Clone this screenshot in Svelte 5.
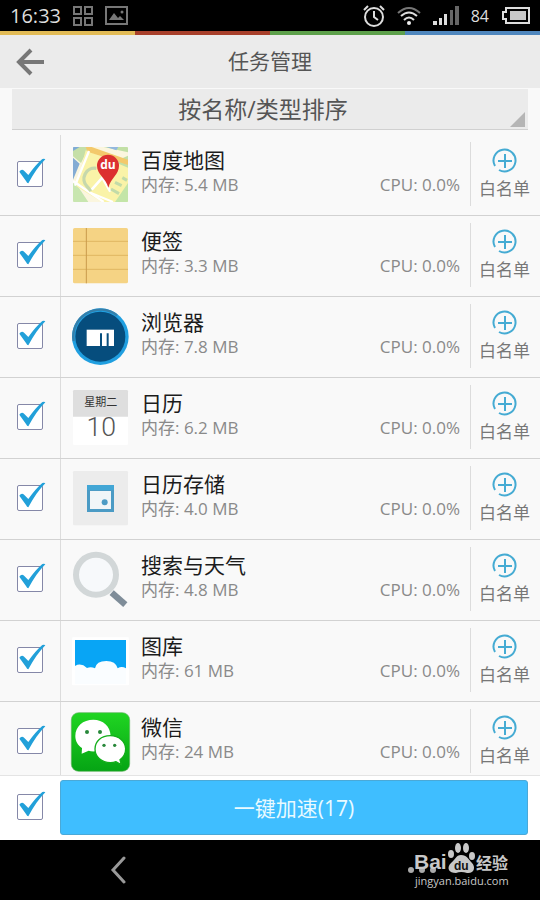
<script>
  let apps = $state([
    { id: 'map', name: '百度地图', memory: '5.4 MB', cpu: '0.0%', checked: true },
    { id: 'notes', name: '便签', memory: '3.3 MB', cpu: '0.0%', checked: true },
    { id: 'browser', name: '浏览器', memory: '7.8 MB', cpu: '0.0%', checked: true },
    { id: 'calendar', name: '日历', memory: '6.2 MB', cpu: '0.0%', checked: true },
    { id: 'storage', name: '日历存储', memory: '4.0 MB', cpu: '0.0%', checked: true },
    { id: 'search', name: '搜索与天气', memory: '4.8 MB', cpu: '0.0%', checked: true },
    { id: 'gallery', name: '图库', memory: '61 MB', cpu: '0.0%', checked: true },
    { id: 'wechat', name: '微信', memory: '24 MB', cpu: '0.0%', checked: true }
  ])

  let total = $state(17)
  let allChecked = $state(true)

  function toggleAll() {
    apps.forEach((app) => (app.checked = allChecked))
  }
</script>

{#snippet tick()}
  <svg class="tick" viewBox="0 0 78 78" aria-hidden="true">
    <path d="M7 32 Q14 22 22 30 L34 42 Q56 11 76 -6 Q83 -8 85 -5 Q58 22 34 67 Q30 67 27 60 Z" />
  </svg>
{/snippet}

{#snippet icon(id)}
  <svg class="icon" viewBox="0 0 165 165" aria-hidden="true">
    {#if id === 'map'}
      <clipPath id="map-clip"><rect width="165" height="165" rx="3" /></clipPath>
      <g clip-path="url(#map-clip)">
        <rect width="165" height="165" fill="#fbf6df" />
        <path d="M0 0H48L24 48 0 28Z" fill="#c5dfa8" />
        <path d="M0 0H20L0 12Z" fill="#7fabd6" />
        <path d="M0 32L20 50 0 98Z" fill="#84acd4" />
        <path d="M0 108L12 114 46 165H0Z" fill="#c8e6b0" />
        <path d="M92 0H165V16Z" fill="#c2e0a6" />
        <path d="M100 0H136L130 10Z" fill="#93b8df" />
        <path d="M134 40L165 26V98L138 76Z" fill="#c3dfa6" />
        <path d="M38 10L80 26 165 62V165H86L10 118Z" fill="#faf3a8" />
        <path d="M38 0H56L165 38V54L44 14Z" fill="#f3c96b" />
        <path d="M48 12L6 116" stroke="#fff" stroke-width="7" />
        <path d="M0 102L92 165" stroke="#fff" stroke-width="7" />
        <path d="M126 165L165 108V165Z" fill="#c3e5a8" />
        <path d="M70 64A32 32 0 0 0 42 118L54 132" fill="none" stroke="#c6d8ac" stroke-width="10" />
        <path d="M56 128L88 92 112 134" fill="none" stroke="#fff" stroke-width="8" />
        <path d="M126 106L146 116M114 126L138 140M148 92L162 100" stroke="#c2dba8" stroke-width="9" />
        <path d="M54 138L120 165" stroke="#fff" stroke-width="6" />
      </g>
      <path d="M106 122C98 92 72 82 72 56A33 33 0 0 1 138 56C138 82 114 92 106 122Z" fill="#dc3030" />
      <text x="105" y="67" class="pin">du</text>
    {:else if id === 'notes'}
      <rect width="165" height="166" rx="5" fill="#f5d384" />
      <path d="M0 40H165M0 82H165M0 124H165" stroke="#dfb662" stroke-width="3" />
      <path d="M40 0V166" stroke="#c99a4c" stroke-width="3" />
    {:else if id === 'browser'}
      <circle cx="82" cy="83" r="85" fill="#209fe0" />
      <path d="M2 96A81 81 0 0 1 132 19" fill="none" stroke="#347fab" stroke-width="7" />
      <circle cx="82" cy="83" r="75" fill="#064d7d" />
      <path d="M41 62H123V111H41Z" fill="#fff" />
      <path d="M84 73V111M104 73V111" stroke="#064d7d" stroke-width="6" />
    {:else if id === 'calendar'}
      <rect width="165" height="165" rx="4" fill="#fff" />
      <path d="M4 0H161Q165 0 165 4V80H0V4Q0 0 4 0Z" fill="#dedede" />
      <text x="83" y="47" class="weekday">星期二</text>
      <text x="85" y="137" class="date">10</text>
    {:else if id === 'storage'}
      <rect width="165" height="163" rx="4" fill="#ececec" />
      <path d="M42 42H123V123H42Z" fill="#4b9bc5" />
      <path d="M51 60H114V114H51Z" fill="#f0f5f8" />
      <path d="M42 42H123V57H42Z" fill="#42a6d5" />
      <circle cx="95" cy="94" r="9" fill="#4b9bc5" />
    {:else if id === 'search'}
      <path d="M116 122L157 158" stroke="#7f8d99" stroke-width="19" />
      <circle cx="69" cy="68" r="60" fill="#f7f9fb" stroke="#d2d7d8" stroke-width="18" />
    {:else if id === 'gallery'}
      <rect x="-3" y="13" width="171" height="144" rx="3" fill="#fff" />
      <rect x="6" y="21" width="153" height="90" fill="#08a5f5" />
      <path d="M6 99Q24 88 42 105Q54 100 66 106Q70 84 100 84Q128 84 134 106Q146 98 159 106V153H6Z" fill="#fafdff" />
    {:else}
      <defs>
        <linearGradient id="wechat-green" x2="0" y2="1">
          <stop stop-color="#20d522" />
          <stop offset="1" stop-color="#05a414" />
        </linearGradient>
      </defs>
      <rect x="-5" y="-4" width="175" height="176" rx="22" fill="url(#wechat-green)" stroke="#5db55d" stroke-width="2" />
      <path d="M61 17C30 17 7 37 7 66C7 82 15 94 27 102L26 119L47 110Q55 113 67 112C96 111 113 91 113 65C112 37 90 17 61 17Z" fill="#fff" />
      <path d="M112 65C84 65 66 82 66 105C66 129 86 146 112 146Q122 146 129 143L145 152L141 137C152 129 158 118 158 104C157 82 138 65 112 65Z" fill="#fff" stroke="#12ae1a" stroke-width="4" />
      <g fill="#28883a">
        <circle cx="42" cy="54" r="6" />
        <circle cx="81" cy="54" r="6" />
        <circle cx="93" cy="94" r="5" />
        <circle cx="125" cy="94" r="5" />
      </g>
    {/if}
  </svg>
{/snippet}

<div class="screen">
  <div class="status">
    <span class="time">16:33</span>
    <svg width="20" height="20" viewBox="0 0 20 20" fill="none" stroke="#777" stroke-width="2">
      <path d="M1 1H8V8H1ZM12 1H19V8H12ZM1 12H8V19H1ZM12 12H19V19H12Z" />
    </svg>
    <svg width="23" height="19" viewBox="0 0 23 19">
      <path d="M1 1H22V18H1Z" fill="none" stroke="#777" stroke-width="2" />
      <path d="M4 14L9 7L13 12L15 10L19 14Z" fill="#777" />
      <circle cx="17" cy="6" r="1.5" fill="#777" />
    </svg>
    <span class="spacer"></span>
    <svg width="22" height="22" viewBox="0 0 22 22" fill="none" stroke="#ddd" stroke-width="2">
      <circle cx="11" cy="12" r="9" />
      <path d="M11 6V12L15 15M1 5L5 1M17 1L21 5" />
    </svg>
    <svg width="24" height="20" viewBox="0 0 24 20" fill="none" stroke-width="2">
      <path d="M1 7Q12 -3 23 7" stroke="#777" />
      <path d="M4 10Q12 3 20 10M7 14Q12 9 17 14" stroke="#ddd" />
      <circle cx="12" cy="17" r="2" fill="#eee" />
    </svg>
    <svg width="26" height="19" viewBox="0 0 26 19">
      <path d="M0 15H4V19H0ZM6 12H9V19H6ZM11 8H14V19H11Z" fill="#ddd" />
      <path d="M17 4H20V19H17ZM22 0H26V19H22Z" fill="#666" />
    </svg>
    <span class="level">84</span>
    <svg width="29" height="17" viewBox="0 0 29 17">
      <path d="M5 1H28V16H5V12H2V5H5Z" fill="none" stroke="#ddd" stroke-width="2" />
      <path d="M9 4H25V13H9Z" fill="#c8c8c8" />
    </svg>
  </div>

  <div class="stripe"><i class="yellow"></i><i class="red"></i><i class="green"></i><i class="blue"></i></div>

  <header>
    <button class="back" aria-label="返回">
      <svg width="30" height="28" viewBox="0 0 30 28" fill="none" stroke="#777" stroke-width="4">
        <path d="M29 14H4M16 2L4 14L16 26" />
      </svg>
    </button>
    <h1>任务管理</h1>
  </header>

  <button class="sort">按名称/类型排序</button>

  <ul class="apps">
    {#each apps as app (app.id)}
      <li class="app">
        <label class="check">
          <input type="checkbox" bind:checked={app.checked} aria-label={app.name} />
          {@render tick()}
        </label>
        <div class="info">
          {@render icon(app.id)}
          <div class="text">
            <p class="name">{app.name}</p>
            <p class="usage"><span>内存: {app.memory}</span><span>CPU: {app.cpu}</span></p>
          </div>
        </div>
        <button class="whitelist">
          <svg width="26" height="26" viewBox="0 0 26 26" fill="none" stroke="#45abd3" stroke-width="2">
            <path d="M3 18A11 11 0 1 1 7 22" />
            <path d="M13 6V20M6 13H20" />
          </svg>
          白名单
        </button>
      </li>
    {/each}
  </ul>

  <footer>
    <label class="check">
      <input type="checkbox" bind:checked={allChecked} onchange={toggleAll} aria-label="全选" />
      {@render tick()}
    </label>
    <button class="boost">一键加速({total})</button>
  </footer>

  <nav>
    <button class="nav-back" aria-label="返回">
      <svg width="16" height="28" viewBox="0 0 16 28" fill="none" stroke="#999" stroke-width="3" stroke-linecap="round">
        <path d="M14 2L3 14L14 26" />
      </svg>
    </button>
    <button class="more" aria-label="更多">
      <svg width="28" height="6" viewBox="0 0 28 6" fill="#aaa">
        <circle cx="3" cy="3" r="3" />
        <circle cx="14" cy="3" r="3" />
        <circle cx="25" cy="3" r="3" />
      </svg>
    </button>
    <svg class="watermark" width="100" height="48" viewBox="0 0 100 48" fill="#c8c8c8">
      <text x="0" y="27" class="bai">Bai</text>
      <ellipse cx="37" cy="12" rx="3" ry="4" />
      <ellipse cx="44" cy="6" rx="3" ry="5" />
      <ellipse cx="52" cy="6" rx="3" ry="5" />
      <ellipse cx="58" cy="14" rx="3" ry="4" />
      <path d="M47 13C42 13 41 18 37 21C32 26 35 31 42 31Q47 29 53 31C60 32 62 25 58 21C54 17 53 13 47 13Z" />
      <text x="40" y="28" class="du">du</text>
      <text x="62" y="27" class="jingyan">经验</text>
      <text x="1" y="43" class="url">jingyan.baidu.com</text>
    </svg>
  </nav>
</div>

<style>
  :global(body) {
    margin: 0;
    background: #f9f9f9;
  }

  .screen {
    display: flex;
    flex-direction: column;
    height: 100vh;
    font-family: "Open Sans", "Noto Sans CJK SC", sans-serif;
    color: #555;
  }

  svg {
    display: block;
    flex: none;
  }

  button {
    margin: 0;
    padding: 0;
    border: 0;
    background: none;
    font: inherit;
    color: inherit;
  }

  .status {
    display: flex;
    flex: none;
    align-items: center;
    height: 31px;
    padding: 0 10px;
    gap: 12px;
    background: #000;
    color: #ddd;
  }

  .time {
    font-size: 20px;
  }

  .spacer {
    flex: 1;
  }

  .level {
    font-size: 16px;
  }

  .stripe {
    display: flex;
    flex: none;
    height: 4px;
  }

  .stripe i {
    flex: 1;
  }

  .yellow {
    background: #e2bb56;
  }

  .red {
    background: #a8402b;
  }

  .green {
    background: #5da04b;
  }

  .blue {
    background: #4f86bd;
  }

  header {
    display: grid;
    flex: none;
    grid-template-columns: 60px 1fr 60px;
    align-items: center;
    height: 53px;
    background: #ebebeb;
  }

  .back {
    justify-self: center;
  }

  h1 {
    margin: 0;
    padding-bottom: 2px;
    font-size: 21px;
    font-weight: normal;
    line-height: 28px;
    text-align: center;
  }

  .sort {
    position: relative;
    flex: none;
    height: 41px;
    margin: 1px 12px 5px;
    padding-right: 14px;
    border-bottom: 1px solid #d0d0d0;
    background: #ebebeb;
    font-size: 23px;
    line-height: 40px;
  }

  .sort::after {
    content: "";
    position: absolute;
    right: 3px;
    bottom: 2px;
    border-left: 15px solid transparent;
    border-bottom: 15px solid #b5b5b5;
  }

  .apps {
    flex: 1;
    min-height: 0;
    margin: 0;
    padding: 0;
    list-style: none;
    overflow-y: auto;
    scrollbar-width: none;
  }

  .app {
    display: grid;
    grid-template-columns: 60px 1fr 70px;
    height: 81px;
    border-bottom: 1px solid #d2d2d2;
    box-sizing: border-box;
  }

  .check {
    position: relative;
    display: flex;
    align-items: center;
    justify-content: center;
    padding-bottom: 2px;
  }

  .check input {
    appearance: none;
    width: 26px;
    height: 26px;
    margin: 0;
    border: 1px solid #8588a8;
    border-radius: 2px;
    background: #fff;
  }

  .tick {
    position: absolute;
    width: 26px;
    height: 26px;
    fill: #22a0d9;
    overflow: visible;
    pointer-events: none;
  }

  .check input:not(:checked) + .tick {
    display: none;
  }

  .info {
    display: flex;
    align-items: center;
    min-width: 0;
    padding: 0 10px 0 12px;
    gap: 13px;
    border-left: 1px solid #dcdcdc;
  }

  .icon {
    width: 55px;
    height: 55px;
    margin-bottom: 2px;
    overflow: visible;
  }

  .text {
    flex: 1;
    padding-bottom: 8px;
  }

  p {
    margin: 0;
  }

  .name {
    font-size: 21px;
    line-height: 28px;
    color: #1c1c1c;
  }

  .usage {
    display: flex;
    justify-content: space-between;
    font-size: 17px;
    line-height: 22px;
    color: #8a8a8a;
  }

  .whitelist {
    display: flex;
    flex-direction: column;
    align-items: center;
    justify-content: center;
    gap: 4px;
    margin: 7px 0 9px;
    padding-right: 2px;
    border-left: 1px solid #dcdcdc;
    font-size: 17px;
    line-height: 22px;
    color: #777;
  }

  .pin {
    font: bold 36px "Open Sans", sans-serif;
    fill: #fff;
    text-anchor: middle;
  }

  .weekday {
    font-size: 33px;
    fill: #333;
    text-anchor: middle;
  }

  .date {
    font: 300 80px Roboto, sans-serif;
    fill: #555;
    text-anchor: middle;
  }

  footer {
    display: grid;
    flex: none;
    grid-template-columns: 60px 1fr;
    height: 65px;
    padding-right: 12px;
    border-top: 1px solid #e4e4e4;
    background: #fff;
    box-sizing: border-box;
  }

  .boost {
    margin: 4px 0 5px;
    padding-bottom: 2px;
    border: 1px solid #4aa9d8;
    border-radius: 3px;
    background: #3fbeff;
    font-size: 21px;
    color: #e9faff;
  }

  nav {
    position: relative;
    display: flex;
    flex: none;
    align-items: center;
    justify-content: space-between;
    height: 60px;
    padding: 0 104px 0 110px;
    background: #000;
  }

  .watermark {
    position: absolute;
    top: 2px;
    right: 26px;
  }

  .bai {
    font: bold 21px "Liberation Sans", sans-serif;
  }

  .du {
    font: bold 12px "Liberation Sans", sans-serif;
    fill: #111;
  }

  .jingyan {
    font: bold 16px "Noto Sans CJK SC", sans-serif;
  }

  .url {
    font: 11px "Open Sans", sans-serif;
  }
</style>
